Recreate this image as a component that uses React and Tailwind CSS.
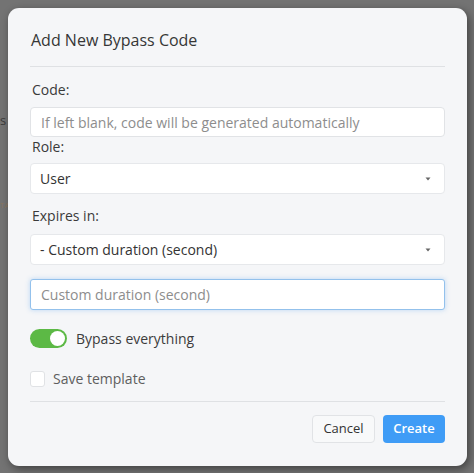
import { useState } from 'react';

function Caret() {
  return (
    <svg width="6" height="4" viewBox="0 0 6 4" className="shrink-0">
      <path d="M0.5 0.5 L5.5 0.5 L3 3.5 Z" fill="#666" />
    </svg>
  );
}

export default function App() {
  const [bypass, setBypass] = useState(true);
  const [save, setSave] = useState(false);

  return (
    <div className="relative w-[474px] h-[473px] overflow-hidden bg-[#737373] p-2 font-['Open_Sans',sans-serif]">
      {/* page behind the overlay */}
      <span className="absolute left-0 top-[110px] text-[13px] leading-5 text-[#3b3b3b]">s</span>
      <span className="absolute left-0 top-[199px] text-[8px] leading-3 text-[#8a7560]">TA</span>

      <div className="relative w-[459px] h-[458px] rounded-[11px] bg-[#f5f6f8] shadow-[2px_3px_8px_rgba(0,0,0,0.45)] flex flex-col px-[22px]">
        {/* header */}
        <div className="pt-5 pb-[14px] border-b border-[#dfe1e4]">
          <h2 className="text-[16px] leading-6 text-[#363636] pl-px">Add New Bypass Code</h2>
        </div>

        {/* body */}
        <div className="flex flex-col pt-[13px]">
          <label className="text-[14px] leading-5 text-[#3a3a3a] pl-[2px]">Code:</label>
          <input
            className="mt-[7px] h-[30px] w-full rounded-[4px] border border-[#e1e3e6] bg-white px-[10px] text-[14px] text-[#333] placeholder:text-[#8d8d8d] outline-none"
            placeholder="If left blank, code will be generated automatically"
          />
          <label className="text-[14px] leading-5 text-[#3a3a3a] pl-[2px]">Role:</label>
          <div className="mt-[6px] h-[31px] w-full rounded-[4px] border border-[#e6e8eb] bg-white pl-[9px] pr-[13px] flex items-center justify-between">
            <span className="text-[14px] text-[#333]">User</span>
            <Caret />
          </div>
          <label className="mt-[12px] text-[14px] leading-5 text-[#3a3a3a] pl-[2px]">Expires in:</label>
          <div className="mt-2 h-[31px] w-full rounded-[4px] border border-[#e6e8eb] bg-white pl-[9px] pr-[13px] flex items-center justify-between">
            <span className="text-[14px] text-[#333]">- Custom duration (second)</span>
            <Caret />
          </div>
          <input
            autoFocus
            className="mt-[14px] h-[31px] w-full rounded-[3px] border border-[#93c1ec] bg-white px-[10px] text-[14px] text-[#333] placeholder:text-[#8d8d8d] outline-none shadow-[0_0_5px_rgba(110,175,240,0.45)]"
            placeholder="Custom duration (second)"
          />

          <div className="mt-[18px] flex items-center gap-[9px]">
            <button
              onClick={() => setBypass(!bypass)}
              className={`relative h-[19px] w-[37px] rounded-full ${bypass ? 'bg-[#5cb945]' : 'bg-[#ccc]'}`}
            >
              <span
                className={`absolute top-[2px] h-[15px] w-[15px] rounded-full bg-white ${bypass ? 'left-[20px]' : 'left-[2px]'}`}
              />
            </button>
            <span className="text-[14px] text-[#3c3c3c]">Bypass everything</span>
          </div>

          <div className="mt-[19px] flex items-center gap-2">
            <button
              onClick={() => setSave(!save)}
              className="h-4 w-[15px] rounded-[3px] border border-[#e0e2e5] bg-white"
            />
            <span className="text-[14px] text-[#5e5e5e]">Save template</span>
          </div>
        </div>

        {/* footer */}
        <div className="mt-3 border-t border-[#dfe1e4] pt-[13px] flex justify-end gap-2">
          <button className="h-7 w-[63px] rounded-[4px] border border-[#e1e3e6] bg-[#f8f9fa] text-[13px] text-[#333]">
            Cancel
          </button>
          <button className="h-7 w-[62px] rounded-[4px] bg-[#3f9cf6] text-[13px] font-semibold text-white">
            Create
          </button>
        </div>
      </div>
    </div>
  );
}
